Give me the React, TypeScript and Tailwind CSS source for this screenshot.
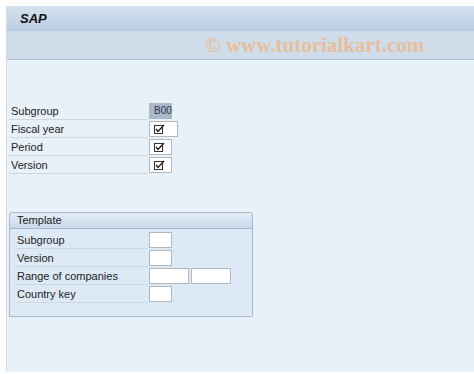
import React from "react";

const Check = () => (
  <svg width="11" height="10" viewBox="0 0 11 10" className="block">
    <rect x="0.5" y="1.5" width="8" height="8" fill="white" stroke="#333" strokeWidth="1" />
    <path d="M2 5 L4 7.5 L10 1" fill="none" stroke="#222" strokeWidth="1.4" />
  </svg>
);

const Box = ({ w, children, hl }: { w: number; children?: React.ReactNode; hl?: boolean }) => (
  <div
    className={`h-[16px] border flex items-center pl-[4px] ${hl ? "bg-[#aab9cc] border-[#aab9cc]" : "bg-white border-[#b4b8bc]"}`}
    style={{ width: w }}
  >
    {children}
  </div>
);

const Row = ({ label, labelW, children }: { label: string; labelW: number; children?: React.ReactNode }) => (
  <div className="flex items-start h-[18px]">
    <div
      className="h-[17px] border-b border-[#cfd7df] pl-[2px] leading-[16px] text-[11px] text-[#222]"
      style={{ width: labelW }}
    >
      {label}
    </div>
    <div className="ml-[1px] flex gap-[2px]">{children}</div>
  </div>
);

export default function App() {
  return (
    <div className="w-[474px] h-[374px] bg-white pt-[6px] pl-[6px] overflow-hidden" style={{ fontFamily: '"Liberation Sans", Arial, sans-serif' }}>
      <div className="h-[366px] bg-[#e8f0f8] border-l border-[#d3dbe3] flex flex-col">
        <div className="h-[25px] bg-gradient-to-b from-[#d6e3f0] to-[#b8cce2] flex items-center pl-[13px]">
          <span className="font-bold italic text-[13px] text-[#111]">SAP</span>
        </div>
        <div className="h-[29px] bg-[#cfdcea] border-b border-[#a9bccf] flex items-center pl-[198px]">
          <span
            className="font-bold text-[21px] text-[#e6bf9a] leading-none"
            style={{ fontFamily: '"Liberation Serif", "Times New Roman", serif' }}
          >
            © www.tutorialkart.com
          </span>
        </div>
        <div className="pt-[43px] pl-[2px]">
          <Row label="Subgroup" labelW={139}>
            <Box w={23} hl>
              <span className="text-[10px] text-[#334] leading-none">B00</span>
            </Box>
          </Row>
          <Row label="Fiscal year" labelW={139}>
            <Box w={29}><Check /></Box>
          </Row>
          <Row label="Period" labelW={139}>
            <Box w={23}><Check /></Box>
          </Row>
          <Row label="Version" labelW={139}>
            <Box w={23}><Check /></Box>
          </Row>

          <div className="mt-[37px] w-[244px] h-[105px] border border-[#a9b9c9] rounded-t-[3px] bg-[#dde9f5]">
            <div className="h-[16px] bg-gradient-to-b from-[#e2ecf6] to-[#c9daec] border-b border-[#a9b9c9] rounded-t-[3px] pl-[7px] text-[11px] leading-[15px] text-[#222]">
              Template
            </div>
            <div className="pt-[3px] pl-[5px]">
              <Row label="Subgroup" labelW={133}>
                <Box w={23} />
              </Row>
              <Row label="Version" labelW={133}>
                <Box w={23} />
              </Row>
              <Row label="Range of companies" labelW={133}>
                <Box w={40} />
                <Box w={40} />
              </Row>
              <Row label="Country key" labelW={133}>
                <Box w={23} />
              </Row>
            </div>
          </div>
        </div>
      </div>
    </div>
  );
}
